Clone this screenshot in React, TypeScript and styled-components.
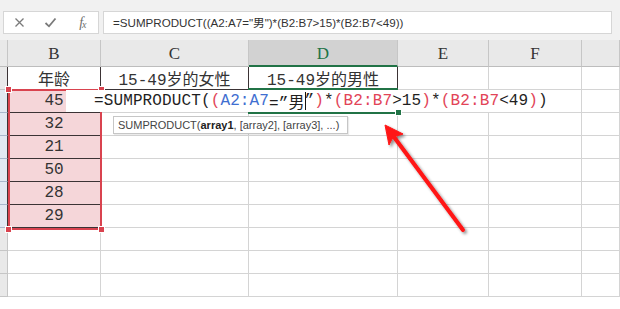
import React from 'react';
import styled, { createGlobalStyle } from 'styled-components';

const GlobalStyle = createGlobalStyle`
  html, body {
    margin: 0;
    padding: 0;
    background: #fff;
  }
  body {
    width: 620px;
    height: 309px;
    overflow: hidden;
    font-family: "Liberation Sans", "Noto Sans CJK SC", sans-serif;
  }
`;

const GRID = '#d4d4d4';
const DARK = '#3b3335';
const RED = '#d9434f';
const GREEN = '#217346';

const Page = styled.div`
  position: relative;
  width: 620px;
  height: 309px;
  overflow: hidden;
  background: #fff;
`;

const FormulaBar = styled.div`
  height: 40px;
  box-sizing: border-box;
  background: #f1f1f1;
  display: flex;
  align-items: flex-start;
  gap: 4px;
  padding: 11px 8px 0 3px;
`;

const ButtonBox = styled.div`
  width: 96px;
  height: 23px;
  box-sizing: border-box;
  background: #fff;
  border: 1px solid #d6d6d6;
  display: grid;
  grid-template-columns: repeat(3, 1fr);
  align-items: center;
  justify-items: center;
  color: #7a7a7a;
`;

const Fx = styled.span`
  font-family: "Liberation Serif", serif;
  font-style: italic;
  font-size: 14px;
  color: #6f6f6f;
  letter-spacing: -1px;

  sub {
    font-size: 10px;
    vertical-align: -1px;
  }
`;

const FormulaInput = styled.div`
  flex: 1;
  height: 23px;
  box-sizing: border-box;
  background: #fff;
  border: 1px solid #d6d6d6;
  padding-left: 9px;
  font-size: 11.6px;
  line-height: 21px;
  color: #333;
  white-space: nowrap;
`;

const Sheet = styled.div`
  position: relative;
  display: grid;
  grid-template-columns: 8px 93px 148px 149px 91px 93px 1fr;
  grid-template-rows: 27px;
  grid-auto-rows: 23px;
`;

const HeadCell = styled.div<{ $active?: boolean }>`
  box-sizing: border-box;
  background: ${p => (p.$active ? '#d2d2d2' : '#e9e9e9')};
  border-right: 1px solid #c6c6c6;
  border-bottom: ${p => (p.$active ? `2px solid ${GREEN}` : '1px solid #bdbdbd')};
  display: flex;
  align-items: center;
  justify-content: center;
  font-family: "Liberation Serif", serif;
  font-size: 17px;
  color: ${p => (p.$active ? GREEN : '#333')};
  padding-top: 2px;
`;

const RowHead = styled.div<{ $picked?: boolean; $edge?: string }>`
  box-sizing: border-box;
  background: ${p => (p.$picked ? '#e2e8f2' : '#e9e9e9')};
  border-bottom: 1px solid ${p => (p.$picked ? '#a9b7cc' : '#c6c6c6')};
  border-right: 1px solid ${p => p.$edge ?? '#c6c6c6'};
`;

const Cell = styled.div<{ $fill?: string; $right?: string; $bottom?: string }>`
  box-sizing: border-box;
  background: ${p => p.$fill ?? '#fff'};
  border-right: 1px solid ${p => p.$right ?? GRID};
  border-bottom: 1px solid ${p => p.$bottom ?? GRID};
  display: flex;
  align-items: center;
  justify-content: center;
  font-family: "Liberation Mono", "Noto Sans CJK SC", monospace;
  font-size: 16px;
  color: #333;
  white-space: nowrap;
`;

const RangeBox = styled.div`
  position: absolute;
  left: 8px;
  top: 49px;
  width: 94px;
  height: 141px;
  box-sizing: border-box;
  border: 2px solid ${RED};
  z-index: 1;
`;

const Handle = styled.span<{ $color: string }>`
  position: absolute;
  width: 5px;
  height: 5px;
  background: ${p => p.$color};
  border: 1px solid #fff;
  box-sizing: content-box;
`;

const Editor = styled.div`
  position: absolute;
  left: 66px;
  top: 50px;
  width: 487px;
  height: 22px;
  box-sizing: border-box;
  background: #fff;
  padding-left: 28px;
  display: flex;
  align-items: center;
  font-family: "Liberation Mono", "Noto Sans CJK SC", monospace;
  font-size: 16px;
  letter-spacing: 0.12px;
  color: #1f1f1f;
  white-space: pre;
  z-index: 2;
`;

const Tok = styled.span<{ $tone?: 'red' | 'blue' }>`
  color: ${p => (p.$tone === 'red' ? '#e24457' : p.$tone === 'blue' ? '#3f6fd1' : '#1f1f1f')};
`;

const Caret = styled.span`
  display: inline-block;
  width: 1px;
  height: 18px;
  background: #111;
  margin: 0 -1px 0 0;
`;

const ActiveCell = styled.div`
  position: absolute;
  left: 248px;
  top: 48px;
  width: 150px;
  height: 26px;
  box-sizing: border-box;
  border-top: 2px solid ${GREEN};
  border-bottom: 2px solid ${GREEN};
  z-index: 3;
`;

const Tip = styled.div`
  position: absolute;
  left: 113px;
  top: 76px;
  width: 235px;
  height: 18px;
  box-sizing: border-box;
  background: #fff;
  border: 1px solid #c6c6c6;
  box-shadow: 1px 1px 1px rgba(0, 0, 0, 0.08);
  padding-left: 4px;
  font-size: 11px;
  line-height: 16px;
  color: #444;
  white-space: nowrap;
  z-index: 4;

  b {
    color: #222;
  }
`;

const ArrowLayer = styled.svg`
  position: absolute;
  left: 0;
  top: 0;
  pointer-events: none;
  z-index: 5;
  overflow: visible;
`;

const columns = ['B', 'C', 'D', 'E', 'F', ''];
const ages = ['45', '32', '21', '50', '28', '29'];

export default function App() {
  const rows = Array.from({ length: 10 }, (_, i) => i + 1);

  return (
    <Page>
      <GlobalStyle />
      <FormulaBar>
        <ButtonBox>
          <svg width="11" height="11" viewBox="0 0 11 11">
            <path d="M1.5 1.5 L9.5 9.5 M9.5 1.5 L1.5 9.5" stroke="#7a7a7a" strokeWidth="1.3" fill="none" />
          </svg>
          <svg width="13" height="11" viewBox="0 0 13 11">
            <path d="M1.5 6 L5 9.3 L11.5 1.5" stroke="#7a7a7a" strokeWidth="1.8" fill="none" />
          </svg>
          <Fx>
            f<sub>x</sub>
          </Fx>
        </ButtonBox>
        <FormulaInput>=SUMPRODUCT((A2:A7="男")*(B2:B7&gt;15)*(B2:B7&lt;49))</FormulaInput>
      </FormulaBar>

      <Sheet>
        <HeadCell />
        {columns.map(c => (
          <HeadCell key={c || 'g'} $active={c === 'D'}>
            {c}
          </HeadCell>
        ))}

        {rows.map(r => {
          const inRange = r >= 2 && r <= 7;
          const titleRow = r === 1;
          return (
            <React.Fragment key={r}>
              <RowHead $picked={inRange} $edge={titleRow || inRange ? DARK : undefined} />
              <Cell
                $fill={inRange ? '#f5d6d9' : undefined}
                $right={titleRow || inRange ? DARK : undefined}
                $bottom={titleRow || inRange ? DARK : undefined}
              >
                {titleRow ? '年龄' : inRange ? ages[r - 2] : ''}
              </Cell>
              <Cell $right={titleRow ? DARK : undefined} $bottom={titleRow ? DARK : undefined}>
                {titleRow ? '15-49岁的女性' : ''}
              </Cell>
              <Cell $right={titleRow ? DARK : undefined} $bottom={titleRow ? GREEN : undefined}>
                {titleRow ? '15-49岁的男性' : ''}
              </Cell>
              <Cell />
              <Cell />
              <Cell />
            </React.Fragment>
          );
        })}

        <RangeBox>
          <Handle $color={RED} style={{ left: -5, top: -5 }} />
          <Handle $color={RED} style={{ right: -5, top: -5 }} />
          <Handle $color={RED} style={{ left: -5, bottom: -5 }} />
          <Handle $color={RED} style={{ right: -5, bottom: -5 }} />
        </RangeBox>

        <Editor>
          <Tok>=SUMPRODUCT(</Tok>
          <Tok $tone="red">(</Tok>
          <Tok $tone="blue">A2:A7</Tok>
          <Tok>=”男</Tok>
          <Caret />
          <Tok>”</Tok>
          <Tok $tone="red">)</Tok>
          <Tok>*</Tok>
          <Tok $tone="red">(B2:B7</Tok>
          <Tok>&gt;15</Tok>
          <Tok $tone="red">)</Tok>
          <Tok>*</Tok>
          <Tok $tone="red">(B2:B7</Tok>
          <Tok>&lt;49</Tok>
          <Tok $tone="red">)</Tok>
          <Tok>)</Tok>
        </Editor>

        <ActiveCell>
          <Handle $color={GREEN} style={{ right: -4, bottom: -4 }} />
        </ActiveCell>

        <Tip>
          SUMPRODUCT(<b>array1</b>, [array2], [array3], ...)
        </Tip>
      </Sheet>

      <ArrowLayer width="620" height="309" viewBox="0 0 620 309">
        <defs>
          <filter id="arrowShadow" x="-20%" y="-20%" width="140%" height="140%">
            <feDropShadow dx="2" dy="2" stdDeviation="1.6" floodColor="#000" floodOpacity="0.45" />
          </filter>
        </defs>
        <g filter="url(#arrowShadow)" fill="#ff1414" stroke="#ff1414">
          <line x1="463" y1="230" x2="394" y2="137" strokeWidth="4" strokeLinecap="round" />
          <polygon points="385,125 403,134 393,137 389,145" strokeWidth="1" strokeLinejoin="round" />
        </g>
      </ArrowLayer>
    </Page>
  );
}
